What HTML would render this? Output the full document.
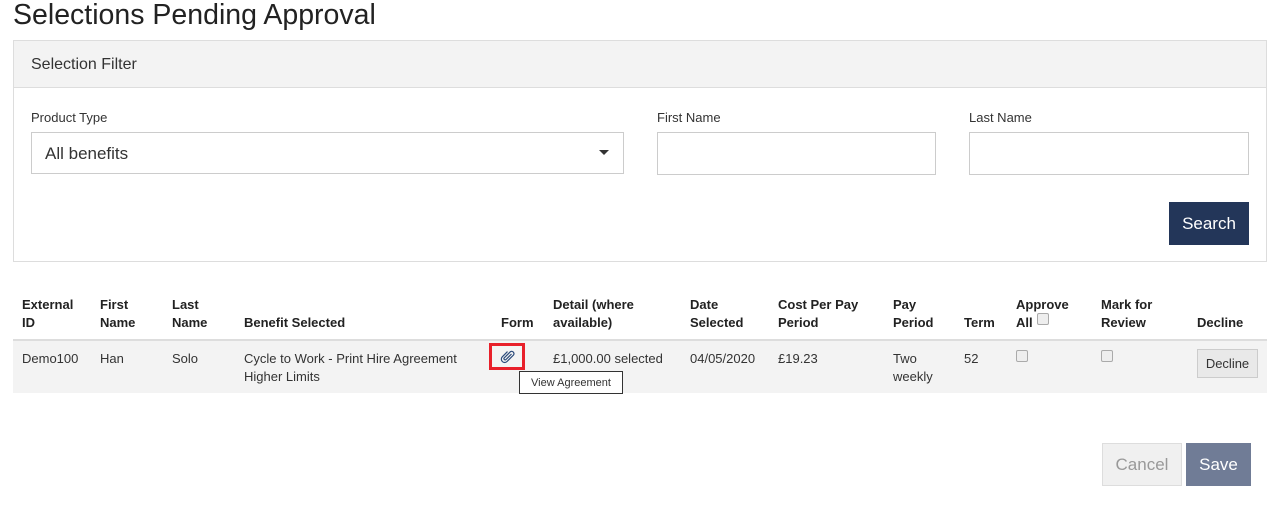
<!DOCTYPE html>
<html><head><meta charset="utf-8"><style>
*{box-sizing:border-box;margin:0;padding:0}
body{width:1284px;height:510px;background:#fff;font-family:"Liberation Sans",sans-serif;color:#333;position:relative;overflow:hidden}
.a{position:absolute}
.h{font-weight:bold;font-size:13px;line-height:18px;color:#222}
.t{font-size:13px;line-height:18px;color:#333}
.cb{position:absolute;width:12px;height:12px;border:1px solid #aaa;border-radius:2px;background:#eee}
</style></head><body>
<div class="a" style="left:13px;top:-3px;font-size:28.5px;color:#222;line-height:36px">Selections Pending Approval</div>
<div class="a" style="left:13px;top:40px;width:1254px;height:222px;border:1px solid #ddd"></div>
<div class="a" style="left:14px;top:41px;width:1252px;height:47px;background:#f3f3f3;border-bottom:1px solid #ddd"></div>
<div class="a" style="left:31px;top:56px;font-size:16px;color:#333">Selection Filter</div>
<div class="a t" style="left:31px;top:109px;color:#333">Product Type</div>
<div class="a" style="left:31px;top:132px;width:593px;height:42px;border:1px solid #ccc"></div>
<div class="a" style="left:45px;top:144px;font-size:17px;color:#333">All benefits</div>
<div class="a" style="left:599px;top:150px;width:0;height:0;border-left:5px solid transparent;border-right:5px solid transparent;border-top:5px solid #333"></div>
<div class="a t" style="left:657px;top:109px">First Name</div>
<div class="a" style="left:657px;top:132px;width:279px;height:43px;border:1px solid #ccc"></div>
<div class="a t" style="left:969px;top:109px">Last Name</div>
<div class="a" style="left:969px;top:132px;width:280px;height:43px;border:1px solid #ccc"></div>
<div class="a" style="left:1169px;top:202px;width:80px;height:43px;background:#233659;color:#fff;font-size:17px;text-align:center;line-height:43px">Search</div>

<div class="a h" style="left:22px;top:296px">External<br>ID</div>
<div class="a h" style="left:100px;top:296px">First<br>Name</div>
<div class="a h" style="left:172px;top:296px">Last<br>Name</div>
<div class="a h" style="left:244px;top:314px">Benefit Selected</div>
<div class="a h" style="left:501px;top:314px">Form</div>
<div class="a h" style="left:553px;top:296px">Detail (where<br>available)</div>
<div class="a h" style="left:690px;top:296px">Date<br>Selected</div>
<div class="a h" style="left:778px;top:296px">Cost Per Pay<br>Period</div>
<div class="a h" style="left:893px;top:296px">Pay<br>Period</div>
<div class="a h" style="left:964px;top:314px">Term</div>
<div class="a h" style="left:1016px;top:296px">Approve<br>All</div>
<div class="cb" style="left:1037px;top:313px"></div>
<div class="a h" style="left:1101px;top:296px">Mark for<br>Review</div>
<div class="a h" style="left:1197px;top:314px">Decline</div>

<div class="a" style="left:13px;top:339px;width:1254px;height:2px;background:#ddd"></div>
<div class="a" style="left:13px;top:341px;width:1254px;height:52px;background:#f3f3f3"></div>
<div class="a t" style="left:22px;top:350px">Demo100</div>
<div class="a t" style="left:100px;top:350px">Han</div>
<div class="a t" style="left:172px;top:350px">Solo</div>
<div class="a t" style="left:244px;top:350px">Cycle to Work - Print Hire Agreement<br>Higher Limits</div>
<div class="a" style="left:489px;top:343px;width:36px;height:27px;border:3px solid #e8202a"></div>
<svg class="a" style="left:500px;top:349px" width="16" height="16" viewBox="0 0 16 16"><path d="M11.5 5 L6 10.5 a1.2 1.2 0 0 1 -1.7 -1.7 L10.3 2.8 a2.3 2.3 0 0 1 3.2 3.2 L7 12.5 a3.3 3.3 0 0 1 -4.7 -4.7 L7.5 2.6" fill="none" stroke="#2b4a7a" stroke-width="1.2"/></svg>
<div class="a" style="left:519px;top:371px;width:104px;height:23px;border:1px solid #333;background:#fff;font-size:11px;line-height:23px;text-align:center;color:#333">View Agreement</div>
<div class="a t" style="left:553px;top:350px">£1,000.00 selected</div>
<div class="a t" style="left:690px;top:350px">04/05/2020</div>
<div class="a t" style="left:778px;top:350px">£19.23</div>
<div class="a t" style="left:893px;top:350px">Two<br>weekly</div>
<div class="a t" style="left:964px;top:350px">52</div>
<div class="cb" style="left:1016px;top:350px"></div>
<div class="cb" style="left:1101px;top:350px"></div>
<div class="a" style="left:1197px;top:349px;width:61px;height:29px;border:1px solid #ccc;background:#e9e9e9;font-size:13px;line-height:27px;text-align:center;color:#333">Decline</div>

<div class="a" style="left:1102px;top:443px;width:80px;height:43px;border:1px solid #ddd;background:#f0f0f0;color:#999;font-size:17px;line-height:41px;text-align:center">Cancel</div>
<div class="a" style="left:1186px;top:443px;width:65px;height:43px;background:#707c96;color:#fff;font-size:17px;line-height:43px;text-align:center">Save</div>
</body></html>
